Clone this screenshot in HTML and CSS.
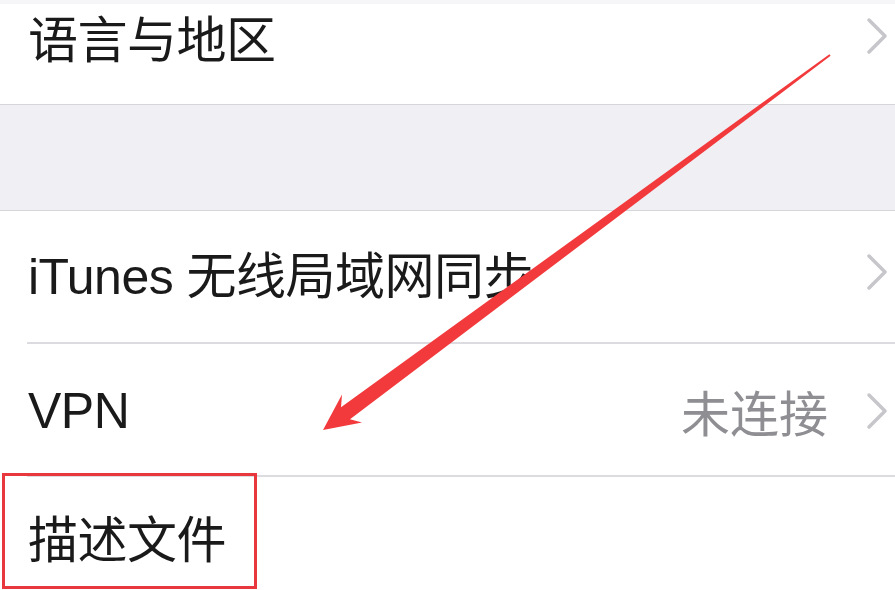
FILE: index.html
```html
<!DOCTYPE html>
<html lang="zh-CN">
<head>
<meta charset="utf-8">
<title>设置</title>
<link rel="stylesheet" href="styles.css">
</head>
<body>
<div class="screen">
  <div class="top-strip"></div>
  <div class="group first">
    <div class="row row-top">
      <span class="label">语言与地区</span>
      <span class="accessory">
        <svg class="chev" viewBox="0 0 22 38"><polyline points="3,3 19,19 3,35"/></svg>
      </span>
    </div>
  </div>
  <div class="gap"></div>
  <div class="group">
    <div class="row sep row-itunes">
      <span class="label">iTunes 无线局域网同步</span>
      <span class="accessory">
        <svg class="chev" viewBox="0 0 22 38"><polyline points="3,3 19,19 3,35"/></svg>
      </span>
    </div>
    <div class="row sep">
      <span class="label">VPN</span>
      <span class="accessory">
        <span class="value">未连接</span>
        <svg class="chev" viewBox="0 0 22 38"><polyline points="3,3 19,19 3,35"/></svg>
      </span>
    </div>
    <div class="row row-last">
      <span class="label">描述文件</span>
    </div>
  </div>

  <div class="highlight"></div>
  <svg class="arrow" viewBox="0 0 895 590">
    <polygon points="323,430 342,394.5 341,407.3 829.4,54.2 830.6,55.8 350,419.3 362,422.5"/>
  </svg>
</div>
</body>
</html>
```

FILE: styles.css
```css
* { box-sizing: border-box; }
html, body {
  margin: 0;
  padding: 0;
  background: #ffffff;
}
.screen {
  position: relative;
  width: 895px;
  height: 590px;
  overflow: hidden;
  background: #ffffff;
  font-family: "Liberation Sans", "Noto Sans CJK SC", sans-serif;
  color: #1a1a1a;
  display: flex;
  flex-direction: column;
}
.top-strip {
  height: 4px;
  background: #f6f6f8;
  flex: none;
}
.group {
  background: #ffffff;
  display: flex;
  flex-direction: column;
  flex: none;
}
.group.first {
  border-bottom: 1px solid #d6d6da;
}
.gap {
  height: 106px;
  background: #efeff4;
  border-bottom: 1px solid #d6d6da;
  flex: none;
}
.row {
  display: flex;
  align-items: center;
  justify-content: space-between;
  padding: 0 7px 0 28px;
  font-size: 50px;
  position: relative;
}
.row-top {
  height: 100px;
  padding-bottom: 36px;
}
.row.sep {
  height: 133px;
}
.row.row-itunes {
  padding-bottom: 12px;
}
.row.sep::after {
  content: "";
  position: absolute;
  left: 27px;
  right: 0;
  bottom: 0;
  height: 2px;
  background: #dcdce0;
}
.row-last {
  height: 120px;
  padding-bottom: 2px;
}
.label {
  white-space: nowrap;
  letter-spacing: -0.5px;
}
.accessory {
  display: flex;
  align-items: center;
  gap: 38px;
}
.value {
  color: #8e8e93;
  font-family: "Noto Sans CJK SC", sans-serif;
  font-size: 49px;
}
.chev {
  width: 22px;
  height: 38px;
  display: block;
}
.chev polyline {
  fill: none;
  stroke: #c6c6cb;
  stroke-width: 3.5;
  stroke-linecap: round;
  stroke-linejoin: round;
}
.highlight {
  position: absolute;
  left: 2px;
  top: 473px;
  width: 255px;
  height: 116px;
  border: 3px solid #e8383d;
}
.arrow {
  position: absolute;
  left: 0;
  top: 0;
  width: 895px;
  height: 590px;
  pointer-events: none;
}
.arrow polygon {
  fill: #f23a3c;
}
```
